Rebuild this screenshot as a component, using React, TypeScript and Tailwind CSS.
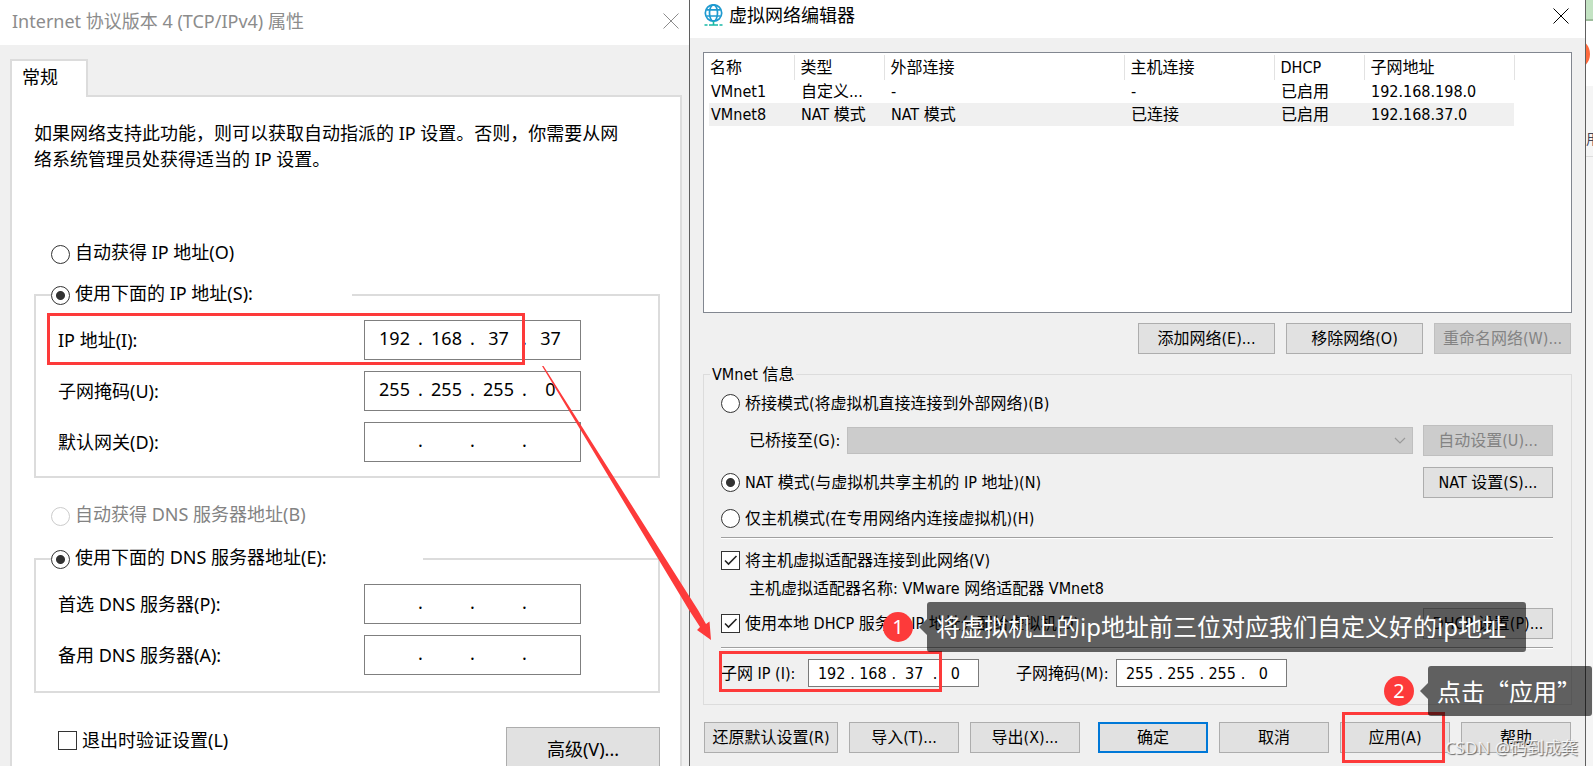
import React from "react";
import { clsx } from "clsx";

const dialogFont =
  "font-['DejaVu_Sans_Condensed','Noto_Sans_CJK_SC',sans-serif]";
const propsFont = "font-['Noto_Sans','Noto_Sans_CJK_SC',sans-serif]";

function CloseIcon({ className }: { className: string }) {
  return (
    <svg viewBox="0 0 16 16" className={className} fill="none" stroke="currentColor">
      <path d="M0.5 0.5 L15.5 15.5 M15.5 0.5 L0.5 15.5" />
    </svg>
  );
}

function GlobeIcon() {
  return (
    <svg viewBox="0 0 20 23" className="h-[23px] w-5" fill="none">
      <g stroke="#1f9ad0" strokeWidth="1.7">
        <circle cx="9.5" cy="9" r="8.2" />
        <ellipse cx="9.5" cy="9" rx="4" ry="8.2" />
        <path d="M2.3 5.8h14.4M2.3 12h14.4" />
      </g>
      <path d="M9.5 17v4M0.5 21h3M5 21h9M15.5 21h3" stroke="#17b8a6" strokeWidth="1.6" />
    </svg>
  );
}

type MarkProps = {
  id: string;
  label: string;
  checked?: boolean;
  disabled?: boolean;
  name?: string;
  className?: string;
  labelClass?: string;
};

function Radio({ id, label, checked, disabled, name, className, labelClass }: MarkProps) {
  return (
    <div className={clsx("flex items-center gap-[5px]", disabled && "text-[#838383]", className)}>
      <input
        type="radio"
        id={id}
        name={name}
        defaultChecked={checked}
        disabled={disabled}
        className="size-[19px] shrink-0 appearance-none rounded-full border border-[#333] bg-white checked:bg-[radial-gradient(circle,#333_0_4px,#fff_5px)] disabled:border-[#ccc]"
      />
      <label htmlFor={id} className={clsx("whitespace-nowrap", labelClass)}>{label}</label>
    </div>
  );
}

function Check({ id, label, checked, className }: MarkProps) {
  return (
    <div className={clsx("flex items-center gap-[5px]", className)}>
      <span className="grid size-[19px] shrink-0">
        <input
          type="checkbox"
          id={id}
          defaultChecked={checked}
          className="peer col-start-1 row-start-1 size-[19px] appearance-none border border-[#333] bg-white"
        />
        <svg
          viewBox="0 0 19 19"
          className="pointer-events-none invisible col-start-1 row-start-1 size-[19px] peer-checked:visible"
          fill="none"
          stroke="#222"
          strokeWidth="1.6"
        >
          <path d="M4 9.5 L7.5 13 L15.5 5" />
        </svg>
      </span>
      <label htmlFor={id} className="whitespace-nowrap">{label}</label>
    </div>
  );
}

function Octets({ id, label, parts, large }: { id: string; label: string; parts: string[]; large?: boolean }) {
  return (
    <div
      role="group"
      aria-label={label}
      className={clsx(
        "flex shrink-0 items-center border bg-white",
        large ? "h-10 w-[217px] border-[#7f7f7f] px-[6px] pb-1" : "h-7 w-[171px] border-[#7a7a7a] px-1",
      )}
    >
      {parts.map((part, i) => (
        <React.Fragment key={i}>
          {i > 0 && <span className={clsx("shrink-0 text-center", large ? "w-[5px]" : "w-1")}>.</span>}
          <input
            id={i === 0 ? id : undefined}
            aria-label={i === 0 ? undefined : label}
            defaultValue={part}
            className="w-0 min-w-0 flex-1 bg-transparent text-center outline-none"
          />
        </React.Fragment>
      ))}
    </div>
  );
}

function Button({ children, className, disabled, primary }: { children: React.ReactNode; className?: string; disabled?: boolean; primary?: boolean }) {
  return (
    <button
      type="button"
      disabled={disabled}
      className={clsx(
        "shrink-0 whitespace-nowrap",
        disabled
          ? "border border-[#bfbfbf] bg-[#ccc] text-[#838383]"
          : primary
            ? "border-2 border-[#0078d7] bg-[#e1e1e1]"
            : "border border-[#adadad] bg-[#e1e1e1]",
        className,
      )}
    >
      {children}
    </button>
  );
}

function PropertyRow({ id, label, parts }: { id: string; label: string; parts: string[] }) {
  return (
    <div className="flex h-10 items-center justify-between">
      <label htmlFor={id}>{label}</label>
      <Octets id={id} label={label} parts={parts} large />
    </div>
  );
}

const empty = ["", "", "", ""];

function PropertiesWindow() {
  return (
    <section className={clsx("flex min-w-0 flex-col overflow-hidden bg-[#f0f0f0] text-[18px] leading-[26px]", propsFont)}>
      <header className="flex h-[45px] shrink-0 items-center justify-between bg-white pr-[10px] pb-1 pl-3 text-[#8c8c8c]">
        <h1>Internet 协议版本 4 (TCP/IPv4) 属性</h1>
        <button type="button" aria-label="关闭"><CloseIcon className="size-4" /></button>
      </header>
      <div className="flex flex-1 flex-col pt-[14px] pr-[7px] pl-[10px]">
        <div role="tablist" className="flex">
          <button type="button" role="tab" aria-selected="true" className="z-10 -mb-0.5 h-[38px] w-[78px] border-2 border-b-0 border-[#dcdcdc] bg-white pb-1 pl-[10px] text-left">
            常规
          </button>
        </div>
        <div className="flex flex-1 flex-col border-2 border-[#dcdcdc] bg-white pr-5 pl-[22px]">
          <p className="mt-[23px] w-[594px]">
            如果网络支持此功能，则可以获取自动指派的 IP 设置。否则，你需要从网络系统管理员处获得适当的 IP 设置。
          </p>
          <Radio id="ip-auto" name="ip" label="自动获得 IP 地址(O)" className="mt-[67px] ml-[17px]" labelClass="pb-1" />
          <fieldset className="mt-[11px] h-[198px] border-2 border-[#dcdcdc] pl-[22px] pr-[77px]">
            <legend className="-ml-[7px] w-[301px] bg-white">
              <Radio id="ip-manual" name="ip" label="使用下面的 IP 地址(S):" checked labelClass="pb-1" />
            </legend>
            <div className="mt-[10px] flex flex-col gap-[11px]">
              <PropertyRow id="ip" label="IP 地址(I):" parts={["192", "168", "37", "37"]} />
              <PropertyRow id="mask" label="子网掩码(U):" parts={["255", "255", "255", "0"]} />
              <PropertyRow id="gateway" label="默认网关(D):" parts={empty} />
            </div>
          </fieldset>
          <Radio id="dns-auto" name="dns" label="自动获得 DNS 服务器地址(B)" disabled className="mt-[23px] ml-[17px]" labelClass="pb-1" />
          <fieldset className="mt-[13px] h-[149px] border-2 border-[#dcdcdc] pl-[22px] pr-[77px]">
            <legend className="-ml-[7px] w-[372px] bg-white">
              <Radio id="dns-manual" name="dns" label="使用下面的 DNS 服务器地址(E):" checked labelClass="pb-1" />
            </legend>
            <div className="mt-[10px] flex flex-col gap-[11px]">
              <PropertyRow id="dns1" label="首选 DNS 服务器(P):" parts={empty} />
              <PropertyRow id="dns2" label="备用 DNS 服务器(A):" parts={empty} />
            </div>
          </fieldset>
          <div className="mt-[34px] flex items-start justify-between pb-4 pl-6">
            <Check id="verify" label="退出时验证设置(L)" />
            <Button className="h-[44px] w-[154px]">高级(V)...</Button>
          </div>
        </div>
      </div>
    </section>
  );
}

const columns = ["名称", "类型", "外部连接", "主机连接", "DHCP", "子网地址"];
const networks = [
  ["VMnet1", "自定义...", "-", "-", "已启用", "192.168.198.0"],
  ["VMnet8", "NAT 模式", "NAT 模式", "已连接", "已启用", "192.168.37.0"],
];

function EditorWindow() {
  return (
    <section className={clsx("flex min-w-0 flex-col border-x border-[#5f5f5f] bg-[#f0f0f0] text-[16px] leading-[23px]", dialogFont)}>
      <header className="flex h-[38px] shrink-0 items-start bg-white pr-4 pl-[14px]">
        <span className="pt-1"><GlobeIcon /></span>
        <h2 className="ml-[5px] flex-1 pt-1 text-[18px]">虚拟网络编辑器</h2>
        <button type="button" aria-label="关闭" className="pt-2"><CloseIcon className="size-4" /></button>
      </header>
      <div className="flex flex-col px-[13px] pt-[14px]">
        <div className="h-[261px] border border-[#828790] bg-white pt-[2px] pl-[5px]">
          <table className="w-[805px] table-fixed border-collapse text-left">
            <colgroup>
              <col className="w-[85px]" /><col className="w-[90px]" /><col className="w-[240px]" />
              <col className="w-[150px]" /><col className="w-[90px]" /><col className="w-[150px]" />
            </colgroup>
            <thead>
              <tr className="h-[25px]">
                {columns.map((c) => (
                  <th key={c} className="border-r border-[#e2e2e2] p-0 pl-[6px] font-normal first:pl-px">{c}</th>
                ))}
              </tr>
            </thead>
            <tbody>
              {networks.map((row, i) => (
                <tr key={row[0]} className={clsx("h-[23px]", i === 1 && "bg-[#f0f0f0]")}>
                  {row.map((cell, j) => (
                    <td key={j} className="p-0 pl-[7px] whitespace-nowrap first:pl-[2px]">{cell}</td>
                  ))}
                </tr>
              ))}
            </tbody>
          </table>
        </div>
        <div className="mt-[10px] flex justify-end gap-[11px] px-px">
          <Button className="h-[31px] w-[137px]">添加网络(E)...</Button>
          <Button className="h-[31px] w-[137px]">移除网络(O)</Button>
          <Button className="h-[31px] w-[137px]" disabled>重命名网络(W)...</Button>
        </div>
        <fieldset className="mt-[9px] h-[342px] border border-[#dcdcdc] pr-[18px] pl-[17px]">
          <legend className="-ml-[11px] px-[2px]">VMnet 信息</legend>
          <Radio id="bridge" name="mode" label="桥接模式(将虚拟机直接连接到外部网络)(B)" className="mt-[6px]" />
          <div className="mt-[10px] flex items-center pl-7">
            <label htmlFor="bridge-to" className="whitespace-nowrap">已桥接至(G):</label>
            <span className="ml-[7px] grid flex-1 items-center">
              <select id="bridge-to" disabled className="col-start-1 row-start-1 h-[27px] w-full appearance-none border border-[#bfbfbf] bg-[#ccc]" />
              <svg viewBox="0 0 12 8" className="pointer-events-none col-start-1 row-start-1 mr-[7px] h-2 w-3 justify-self-end" fill="none" stroke="#9a9a9a" strokeWidth="1.2">
                <path d="M1 1l5 5 5-5" />
              </svg>
            </span>
            <Button className="ml-[10px] h-[31px] w-[130px]" disabled>自动设置(U)...</Button>
          </div>
          <div className="mt-[11px] flex items-center justify-between">
            <Radio id="nat" name="mode" label="NAT 模式(与虚拟机共享主机的 IP 地址)(N)" checked />
            <Button className="h-[31px] w-[130px]">NAT 设置(S)...</Button>
          </div>
          <Radio id="hostonly" name="mode" label="仅主机模式(在专用网络内连接虚拟机)(H)" className="mt-[9px]" />
          <hr className="mt-[7px] h-0.5 border-t border-b border-t-[#a0a0a0] border-b-white" />
          <Check id="connect" label="将主机虚拟适配器连接到此网络(V)" checked className="mt-[10px]" />
          <p className="mt-[5px] pl-7">主机虚拟适配器名称: VMware 网络适配器 VMnet8</p>
          <div className="mt-2 flex items-center justify-between">
            <Check id="dhcp" label="使用本地 DHCP 服务将 IP 地址分配给虚拟机(D)" checked />
            <Button className="h-[31px] w-[130px]">DHCP 设置(P)...</Button>
          </div>
          <hr className="mt-2 h-0.5 border-t border-b border-t-[#a0a0a0] border-b-white" />
          <div className="mt-[10px] flex items-center">
            <label htmlFor="subnet" className="w-[87px] whitespace-nowrap">子网 IP (I):</label>
            <Octets id="subnet" label="子网 IP" parts={["192", "168", "37", "0"]} />
            <label htmlFor="submask" className="ml-[37px] w-[100px] whitespace-nowrap">子网掩码(M):</label>
            <Octets id="submask" label="子网掩码" parts={["255", "255", "255", "0"]} />
          </div>
        </fieldset>
        <div className="mt-[17px] flex justify-between px-px">
          <div className="flex gap-[11px]">
            <Button className="h-[31px] w-[134px]">还原默认设置(R)</Button>
            <Button className="h-[31px] w-[110px]">导入(T)...</Button>
            <Button className="h-[31px] w-[110px]">导出(X)...</Button>
          </div>
          <div className="flex gap-[11px]">
            <Button className="h-[31px] w-[110px]" primary>确定</Button>
            <Button className="h-[31px] w-[110px]">取消</Button>
            <Button className="h-[31px] w-[110px]">应用(A)</Button>
            <Button className="h-[31px] w-[110px]">帮助</Button>
          </div>
        </div>
      </div>
    </section>
  );
}

function BackgroundEdge() {
  return (
    <aside className="flex flex-col overflow-hidden bg-[#f5f5f5]">
      <div className="h-[21px] shrink-0 border-b-2 border-[#9dbd9c] bg-[#c3e3c3]" />
      <div className="flex h-[65px] shrink-0 items-center justify-end bg-white pr-[3px]">
        <span className="size-8 shrink-0 rounded-full bg-[#ff6a3d]" />
      </div>
      <div className="flex h-[71px] shrink-0 items-end border-b border-[#ddd] pb-2 font-['Noto_Sans_CJK_SC',sans-serif] text-[14px] leading-5 text-[#445]">
        用
      </div>
    </aside>
  );
}

function Callout({ step, className, children }: { step: string; className: string; children: React.ReactNode }) {
  return (
    <div className={clsx("absolute flex items-center", className)}>
      <span className="flex size-[30px] items-center justify-center rounded-full bg-[#fd3a3a] text-[20px] leading-none text-white">{step}</span>
      <svg viewBox="0 0 8 16" className="ml-[6px] h-4 w-2" fill="#000" fillOpacity="0.6"><path d="M8 0v16L0 8z" /></svg>
      {children}
    </div>
  );
}

export default function App() {
  return (
    <main className="relative grid h-screen grid-cols-[689fr_897fr_7px] overflow-hidden text-black">
      <PropertiesWindow />
      <EditorWindow />
      <BackgroundEdge />
      <div className={clsx("pointer-events-none absolute inset-0", propsFont)}>
        <div className="absolute top-[313px] left-[47px] h-[52px] w-[478px] border-3 border-[#fd3a3a]" />
        <div className="absolute top-[651px] left-[719px] h-[41px] w-[223px] border-3 border-[#fd3a3a]" />
        <div className="absolute top-[712px] left-[1342px] h-[51px] w-[103px] border-3 border-[#fd3a3a]" />
        <svg viewBox="0 0 170 275" className="absolute top-[366px] left-[542px] h-[275px] w-[170px]" fill="#fd3a3a">
          <path d="M0 0 L1.5 0 L156 244 L164 258 L167.5 255.5 L169 274 L155 264 L158 261 L147 244 Z" />
        </svg>
        <Callout step="1" className="top-[602px] left-[883px]">
          <span className="flex h-[50px] items-center rounded-[3px] bg-black/60 pr-5 pl-[9px] text-[24px] whitespace-nowrap text-white">
            将虚拟机上的ip地址前三位对应我们自定义好的ip地址
          </span>
        </Callout>
        <Callout step="2" className="top-[666px] left-[1384px]">
          <span className="flex h-[50px] items-center rounded-[3px] bg-black/60 pr-[11px] pl-[9px] font-['Noto_Sans_CJK_SC',sans-serif] text-[24px] whitespace-nowrap text-white">
            点击“应用”
          </span>
        </Callout>
        <span className="absolute right-[15px] bottom-[6px] text-[17px] leading-6 whitespace-nowrap text-white/80 [text-shadow:1px_1px_1px_#666]">
          CSDN @码到成龚
        </span>
      </div>
    </main>
  );
}
